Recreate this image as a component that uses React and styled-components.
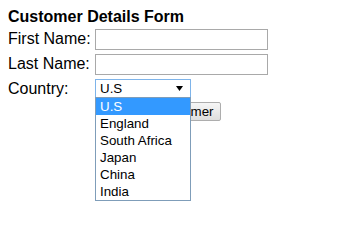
import React from "react";
import styled, { createGlobalStyle } from "styled-components";

const Global = createGlobalStyle`
  html, body { background: #ffffff; }
  body {
    margin: 8px;
    font-family: "Liberation Sans", Arial, sans-serif;
    color: #000000;
  }
  #root { min-height: calc(100vh - 16px); }
`;

const Title = styled.div`
  font-size: 16px;
  font-weight: bold;
  line-height: 18px;
  height: 18px;
`;

const Form = styled.form`
  display: grid;
  grid-template-columns: 87px auto;
  row-gap: 4px;
  align-items: start;
  justify-items: start;
  padding-top: 3px;
  padding-bottom: 90px;
`;

const Label = styled.label`
  font-size: 16px;
  line-height: 18px;
  padding-top: 1px;
`;

const TextInput = styled.input`
  box-sizing: border-box;
  width: 173px;
  height: 21px;
  margin: 0;
  padding: 1px 3px;
  border: 1px solid #a9a9a9;
  background: #ffffff;
  font-family: "Liberation Sans", Arial, sans-serif;
  font-size: 13.33px;
  outline: none;
`;

const SelectWrap = styled.div`
  position: relative;
  z-index: 2;
  width: 96px;
  height: 19px;
`;

const SelectControl = styled.div`
  box-sizing: border-box;
  width: 96px;
  height: 19px;
  border: 1px solid #7eb4ea;
  background: #ffffff;
  font-size: 13.33px;
  line-height: 17px;
  padding-left: 4px;
  display: flex;
  align-items: center;
  justify-content: space-between;
  padding-right: 7px;
`;

const Arrow = styled.svg`
  width: 7px;
  height: 5px;
  display: block;
`;

const ListBox = styled.ul`
  position: absolute;
  left: 0;
  top: 18px;
  z-index: 3;
  box-sizing: border-box;
  width: 96px;
  margin: 0;
  padding: 0;
  list-style: none;
  border: 1px solid #7f9db9;
  background: #ffffff;
`;

const Option = styled.li`
  height: 17px;
  line-height: 17px;
  font-size: 13.33px;
  padding-left: 4px;
  background: ${(p) => (p.$active ? "#3399ff" : "#ffffff")};
  color: ${(p) => (p.$active ? "#ffffff" : "#000000")};
`;

const Button = styled.button`
  grid-column: 2;
  position: relative;
  z-index: 1;
  box-sizing: border-box;
  width: 126px;
  height: 19px;
  margin: 0;
  padding: 0 6px;
  border: 1px solid #adadad;
  border-radius: 2px;
  background: linear-gradient(#f6f6f6, #dedede);
  font-family: "Liberation Sans", Arial, sans-serif;
  font-size: 13.33px;
  color: #000000;
  text-align: center;
  white-space: nowrap;
`;

const countries = ["U.S", "England", "South Africa", "Japan", "China", "India"];

export default function App() {
  return (
    <>
      <Global />
      <Title>Customer Details Form</Title>
      <Form onSubmit={(e) => e.preventDefault()}>
        <Label htmlFor="fn">First Name:</Label>
        <TextInput id="fn" type="text" />
        <Label htmlFor="ln">Last Name:</Label>
        <TextInput id="ln" type="text" />
        <Label>Country:</Label>
        <SelectWrap>
          <SelectControl>
            <span>U.S</span>
            <Arrow viewBox="0 0 7 5">
              <polygon points="0,0 7,0 3.5,5" fill="#000" />
            </Arrow>
          </SelectControl>
          <ListBox>
            {countries.map((c, i) => (
              <Option key={c} $active={i === 0}>
                {c}
              </Option>
            ))}
          </ListBox>
        </SelectWrap>
        <Button type="button">Register Customer</Button>
      </Form>
    </>
  );
}
